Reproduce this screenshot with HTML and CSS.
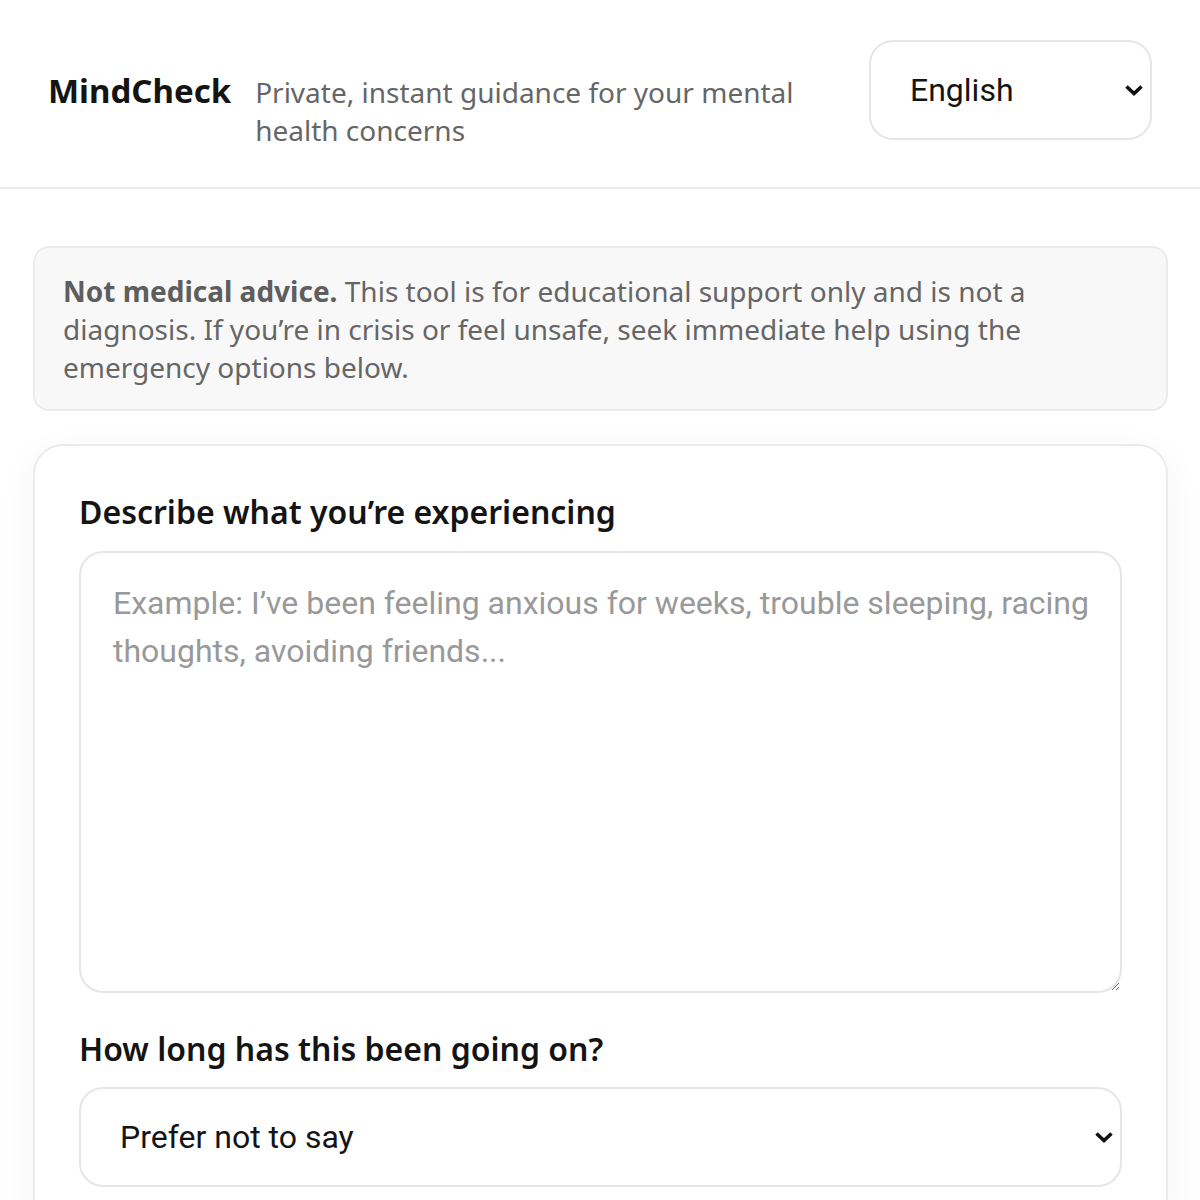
FILE: index.html
```html
<!DOCTYPE html>
<html lang="en">
<head>
<meta charset="utf-8">
<title>MindCheck</title>
<link rel="stylesheet" href="styles.css">
</head>
<body>
<header class="site-header">
  <div class="brand">
    <div class="logo">MindCheck</div>
    <div class="tagline">Private, instant guidance for your mental health concerns</div>
  </div>
  <div class="select-wrap lang-wrap">
    <select class="select lang-select">
      <option>English</option>
    </select>
    <svg class="chevron" viewBox="0 0 20 12" width="20" height="12"><path d="M2.5 2.5 L10 9.5 L17.5 2.5" fill="none" stroke="#111" stroke-width="3.6" stroke-linecap="butt" stroke-linejoin="miter"/></svg>
  </div>
</header>
<main class="main">
  <div class="notice"><strong>Not medical advice.</strong> This tool is for educational support only and is not a diagnosis. If you’re in crisis or feel unsafe, seek immediate help using the emergency options below.</div>
  <section class="card">
    <label class="field-label" for="desc">Describe what you’re experiencing</label>
    <textarea id="desc" class="textarea" placeholder="Example: I’ve been feeling anxious for weeks, trouble sleeping, racing thoughts, avoiding friends..."></textarea>
    <label class="field-label second" for="dur">How long has this been going on?</label>
    <div class="select-wrap">
      <select id="dur" class="select dur-select">
        <option>Prefer not to say</option>
      </select>
      <svg class="chevron" viewBox="0 0 20 12" width="20" height="12"><path d="M2.5 2.5 L10 9.5 L17.5 2.5" fill="none" stroke="#111" stroke-width="3.6" stroke-linecap="butt" stroke-linejoin="miter"/></svg>
    </div>
  </section>
</main>
</body>
</html>
```
FILE: styles.css
```css
* { box-sizing: border-box; }
html, body { margin: 0; padding: 0; background: #ffffff; }
body {
  font-family: "Noto Sans", "Open Sans", sans-serif;
  color: #111;
}
.site-header {
  display: flex;
  justify-content: space-between;
  align-items: flex-start;
  padding: 40px 48px 0 48px;
  height: 189px;
  border-bottom: 2px solid #ececec;
}
.brand {
  display: flex;
  align-items: baseline;
  gap: 24px;
  margin-top: 32px;
}
.logo {
  font-size: 33px;
  font-weight: 700;
  color: #141414;
  line-height: 38px;
  white-space: nowrap;
}
.tagline {
  font-size: 28px;
  line-height: 38px;
  color: #666;
  max-width: 570px;
}
.select-wrap {
  position: relative;
}
.select {
  appearance: none;
  -webkit-appearance: none;
  font-family: Roboto, "Noto Sans", sans-serif;
  font-size: 32px;
  color: #141414;
  background: #fff;
  border: 2px solid #e6e6e6;
  border-radius: 24px;
  height: 100px;
  padding: 0 60px 0 39px;
  outline: none;
}
.lang-select { width: 283px; }
.chevron {
  position: absolute;
  right: 8px;
  top: 44px;
  pointer-events: none;
}
.main {
  padding: 57px 32px 0 33px;
}
.notice {
  background: #f8f8f8;
  border: 2px solid #ebebeb;
  border-radius: 16px;
  padding: 24px 28px 23px;
  font-size: 28px;
  line-height: 38px;
  color: #666;
}
.notice strong { font-weight: 700; color: #5e5e5e; }
.card {
  margin-top: 33px;
  background: #fff;
  border: 2px solid #ebebeb;
  border-radius: 30px;
  padding: 42px 44px 40px;
  box-shadow: 0 12px 40px rgba(0,0,0,0.05);
  display: flex;
  flex-direction: column;
}
.field-label {
  font-size: 32px;
  font-weight: 600;
  line-height: 48px;
  color: #141414;
  margin-bottom: 15px;
}
.field-label.second { margin-top: 32px; margin-bottom: 14px; }
.textarea {
  font-family: Roboto, "Noto Sans", sans-serif;
  font-size: 32px;
  line-height: 48px;
  color: #141414;
  height: 442px;
  padding: 26px 20px 28px 32px;
  border: 2px solid #e6e6e6;
  border-radius: 24px;
  resize: vertical;
  outline: none;
}
.textarea::placeholder { color: #999; }
.dur-select { width: 100%; }
```
